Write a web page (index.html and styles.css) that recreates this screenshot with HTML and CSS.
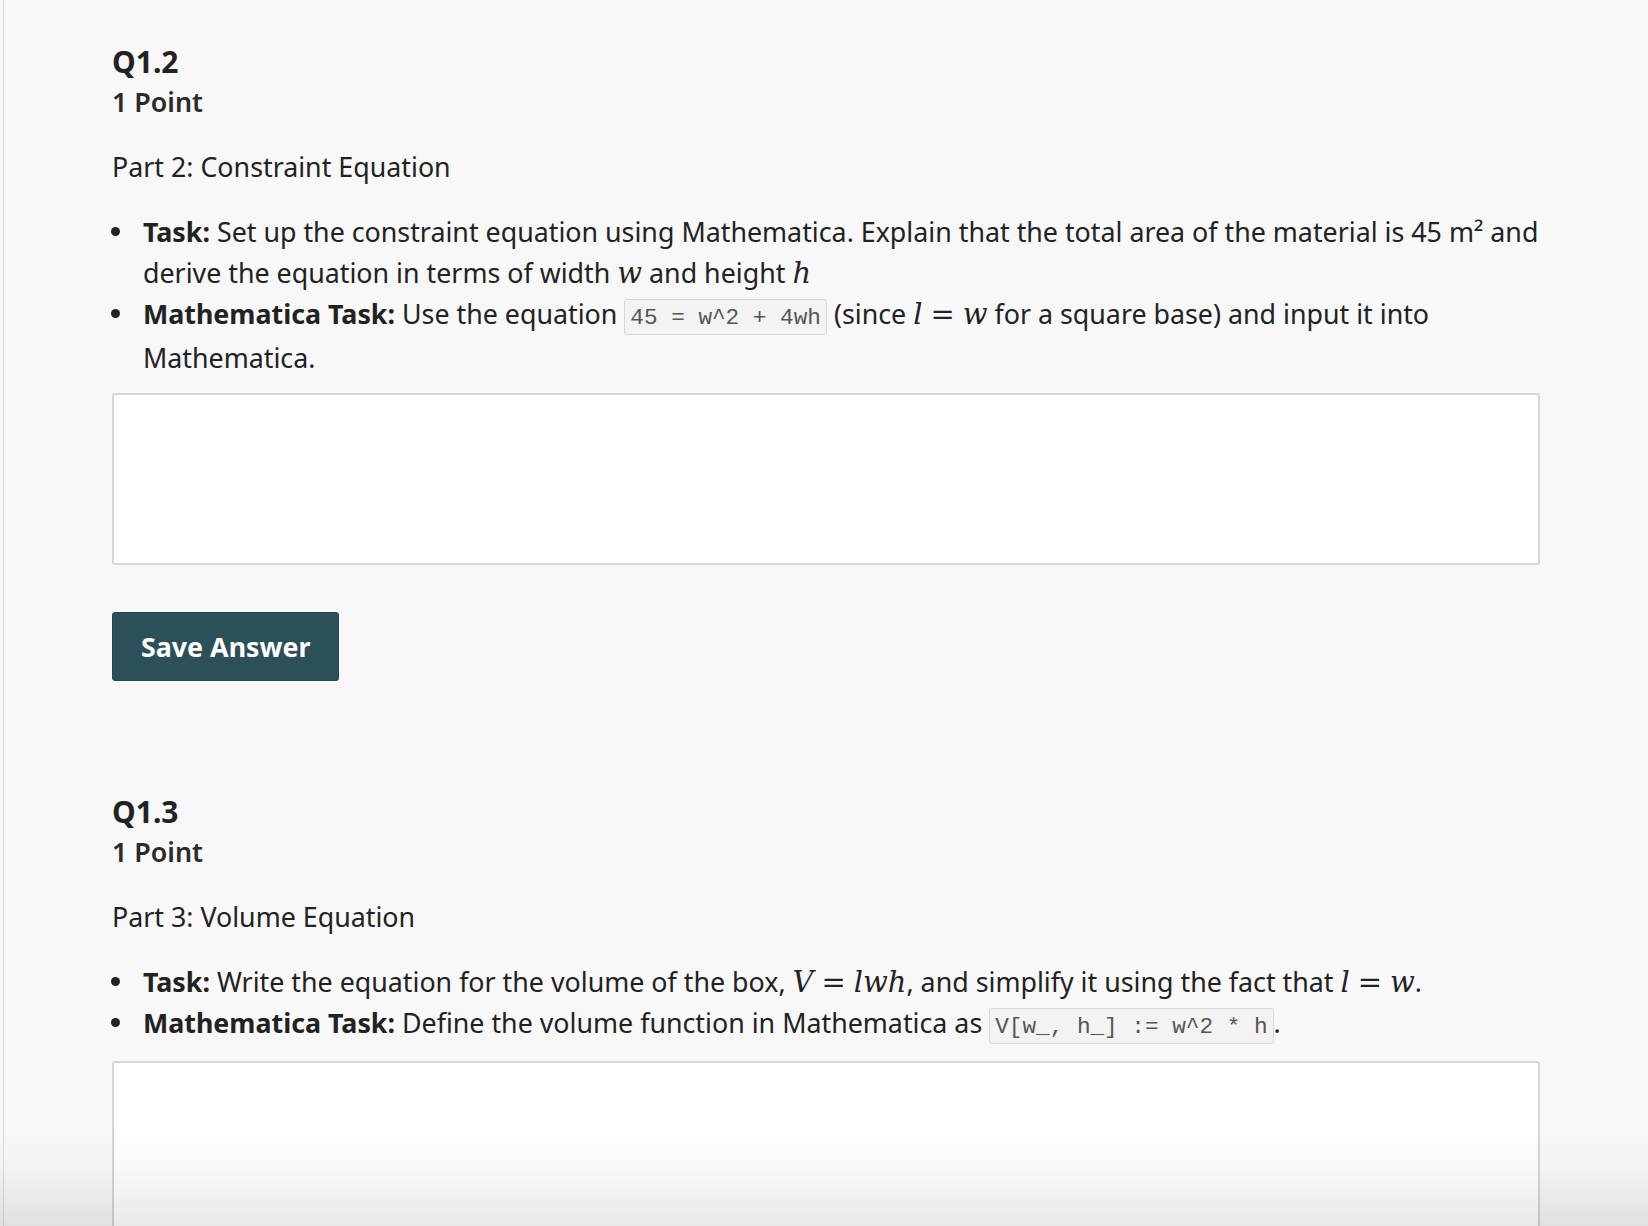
FILE: index.html
```html
<!DOCTYPE html>
<html lang="en">
<head>
<meta charset="utf-8">
<title>Q1.2 – Q1.3</title>
<link rel="stylesheet" href="styles.css">
</head>
<body>
<main class="page">
  <section class="question">
    <h2 class="q-title">Q1.2</h2>
    <div class="q-points">1 Point</div>
    <p class="q-part">Part 2: Constraint Equation</p>
    <ul class="q-tasks">
      <li><strong>Task:</strong> Set up the constraint equation using Mathematica. Explain that the total area of the material is 45 m² and derive the equation in terms of width <span class="katex"><i>w</i></span> and height <span class="katex"><i>h</i></span></li>
      <li><strong>Mathematica Task:</strong> Use the equation <code class="code">45 = w^2 + 4wh</code> (since <span class="katex"><i>l</i><span class="rel">=</span><i>w</i></span> for a square base) and input it into Mathematica.</li>
    </ul>
    <textarea class="answer" aria-label="Answer for Q1.2"></textarea>
    <button class="save" type="button">Save Answer</button>
  </section>

  <section class="question">
    <h2 class="q-title">Q1.3</h2>
    <div class="q-points">1 Point</div>
    <p class="q-part">Part 3: Volume Equation</p>
    <ul class="q-tasks">
      <li><strong>Task:</strong> Write the equation for the volume of the box, <span class="katex"><i>V</i><span class="rel">=</span><i>lwh</i></span>, and simplify it using the fact that <span class="katex"><i>l</i><span class="rel">=</span><i>w</i></span>.</li>
      <li><strong>Mathematica Task:</strong> Define the volume function in Mathematica as <code class="code">V[w_, h_] := w^2 * h</code>.</li>
    </ul>
    <textarea class="answer" aria-label="Answer for Q1.3"></textarea>
  </section>
</main>
<div class="bottom-shade"></div>
</body>
</html>
```

FILE: styles.css
```css
html, body {
  margin: 0;
  padding: 0;
  background: #f8f8f8;
}

body {
  font-family: "Noto Sans", "Open Sans", sans-serif;
  font-size: 26.8px;
  color: #222222;
  overflow: hidden;
}

.page {
  margin-left: 3px;
  border-left: 1px solid #d9d9d9;
  min-height: 1226px;
  padding: 42px 108px 0 108px;
  box-sizing: border-box;
}

.question + .question {
  margin-top: 111px;
}

.q-title {
  margin: 0;
  font-size: 30px;
  line-height: 40px;
  font-weight: 700;
  color: #222222;
}

.q-points {
  font-size: 26.8px;
  line-height: 40px;
  font-weight: 600;
  color: #2b2b2b;
}

.q-part {
  margin: 24px 0 0 0;
  line-height: 41px;
}

.q-tasks {
  margin: 24px -12px 0 0;
  padding-left: 31px;
  line-height: 41px;
  list-style: none;
}

.q-tasks li {
  position: relative;
}

.q-tasks li::before {
  content: "";
  position: absolute;
  left: -32px;
  top: 16px;
  width: 9px;
  height: 9px;
  border-radius: 50%;
  background: #222222;
}

.q-tasks strong {
  font-weight: 700;
}

.katex {
  font-family: "DejaVu Serif", "Liberation Serif", serif;
  font-size: 1.08em;
  font-weight: 300;
  line-height: 1;
  white-space: nowrap;
}

.katex i {
  font-style: italic;
}

.katex .rel {
  font-style: normal;
  margin: 0 0.2778em;
}

.code {
  display: inline-block;
  font-family: "Liberation Mono", "DejaVu Sans Mono", monospace;
  font-size: 22.7px;
  line-height: 26px;
  color: #555555;
  background: #f3f3f3;
  border: 1px solid #d8d8d8;
  border-radius: 3px;
  padding: 5px 5px 3px 5px;
  margin-bottom: 2px;
  white-space: pre;
}

.answer {
  display: block;
  box-sizing: border-box;
  width: 100%;
  height: 172px;
  margin: 15px 0 0 0;
  padding: 10px;
  background: #ffffff;
  border: 2px solid #d6d6d6;
  border-radius: 3px;
  resize: none;
  font-family: inherit;
  font-size: inherit;
}

.save {
  display: flex;
  align-items: center;
  height: 69px;
  margin-top: 47px;
  padding: 0 28px;
  background: #2c505a;
  color: #ffffff;
  border: 1px solid #27474f;
  border-radius: 3px;
  font-family: "Noto Sans", "Open Sans", sans-serif;
  font-size: 26.8px;
  font-weight: 700;
  cursor: pointer;
}

.bottom-shade {
  position: fixed;
  left: 0;
  right: 0;
  bottom: 0;
  height: 100px;
  pointer-events: none;
  background: linear-gradient(to bottom, rgba(0,0,0,0) 0%, rgba(0,0,0,0.02) 40%, rgba(0,0,0,0.09) 100%);
}
```
